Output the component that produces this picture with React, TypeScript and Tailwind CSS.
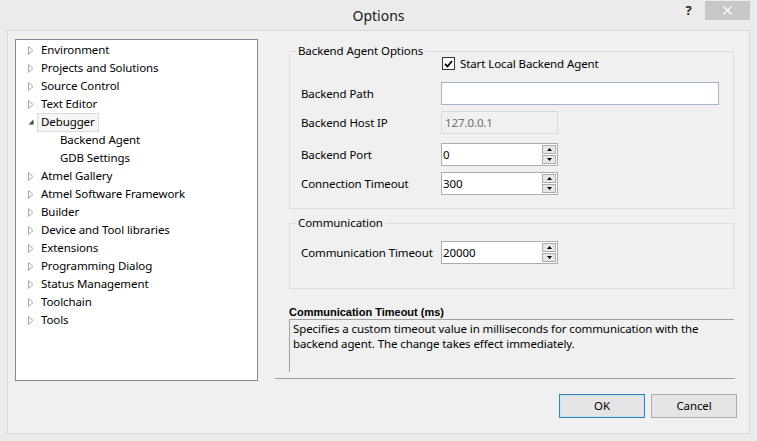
import React from "react";

// ─── Tree data ────────────────────────────────────────────────────────────────

type TreeItem = { label: string; depth: 0 | 1; expanded?: boolean; leaf?: boolean; selected?: boolean };

const TREE: TreeItem[] = [
  { label: "Environment", depth: 0 },
  { label: "Projects and Solutions", depth: 0 },
  { label: "Source Control", depth: 0 },
  { label: "Text Editor", depth: 0 },
  { label: "Debugger", depth: 0, expanded: true, selected: true },
  { label: "Backend Agent", depth: 1, leaf: true },
  { label: "GDB Settings", depth: 1, leaf: true },
  { label: "Atmel Gallery", depth: 0 },
  { label: "Atmel Software Framework", depth: 0 },
  { label: "Builder", depth: 0 },
  { label: "Device and Tool libraries", depth: 0 },
  { label: "Extensions", depth: 0 },
  { label: "Programming Dialog", depth: 0 },
  { label: "Status Management", depth: 0 },
  { label: "Toolchain", depth: 0 },
  { label: "Tools", depth: 0 },
];

function Arrow({ expanded }: { expanded?: boolean }) {
  if (expanded) {
    return (
      <svg width="6" height="6" viewBox="0 0 6 6" className="block">
        <path d="M5.5 0.5 L5.5 5.5 L0.5 5.5 Z" fill="#404040" />
      </svg>
    );
  }
  return (
    <svg width="6" height="9" viewBox="0 0 6 9" className="block">
      <path d="M0.5 0.5 L5 4.5 L0.5 8.5 Z" fill="none" stroke="#a6a6a6" strokeWidth="1" />
    </svg>
  );
}

function TreeRow({ item }: { item: TreeItem }) {
  return (
    <div className="flex h-[18px] items-center">
      <div className={["flex w-[9px] shrink-0 items-center", item.depth === 1 ? "ml-[31px]" : "ml-[12px]"].join(" ")}>
        {!item.leaf && <Arrow expanded={item.expanded} />}
      </div>
      <span
        className={[
          "flex h-[19px] items-center border px-[3px] leading-none",
          item.selected ? "border-[#dadada] bg-[#f6f6f6]" : "border-transparent",
        ].join(" ")}
      >
        {item.label}
      </span>
    </div>
  );
}

// ─── Form controls ────────────────────────────────────────────────────────────

function Spinner() {
  return (
    <div className="flex w-[15px] shrink-0 flex-col gap-px py-px pr-px">
      <div className="flex h-[10px] items-center justify-center border border-[#acacac] bg-[#e6e6e6]">
        <svg width="5" height="3" viewBox="0 0 5 3">
          <path d="M2.5 0 L5 3 L0 3 Z" fill="#000" />
        </svg>
      </div>
      <div className="flex h-[10px] items-center justify-center border border-[#acacac] bg-[#e6e6e6]">
        <svg width="5" height="3" viewBox="0 0 5 3">
          <path d="M0 0 L5 0 L2.5 3 Z" fill="#000" />
        </svg>
      </div>
    </div>
  );
}

function NumericBox({ value }: { value: string }) {
  return (
    <div className="flex h-[23px] w-[117px] border border-[#abadb3] bg-white">
      <span className="flex flex-1 items-center pl-[1px]">{value}</span>
      <Spinner />
    </div>
  );
}

function FieldRow({ label, children, className = "" }: { label: string; children: React.ReactNode; className?: string }) {
  return (
    <div className={["flex items-center", className].join(" ")}>
      <span className="w-[140px] shrink-0">{label}</span>
      {children}
    </div>
  );
}

function Group({ title, children, className = "" }: { title: string; children: React.ReactNode; className?: string }) {
  return (
    <div className={["ml-[14px] w-[445px] border border-[#dcdcdc] pl-[11px]", className].join(" ")}>
      <div className="-ml-[5px] -mt-[9px] flex h-[16px] items-center">
        <span className="bg-[#f0f0f0] px-[2px]">{title}</span>
      </div>
      {children}
    </div>
  );
}

// ─── App ──────────────────────────────────────────────────────────────────────

export default function App() {
  return (
    <div className="flex h-[441px] w-[757px] flex-col bg-[#ebebeb] font-['Segoe_UI','Noto_Sans',sans-serif] text-[11.5px] tracking-[-0.1px] text-black">
      {/* Title bar */}
      <div className="flex h-[30px] shrink-0 items-start">
        <div className="flex h-[31px] flex-1 items-center justify-center pl-[77px] text-[14px] tracking-normal text-[#1a1a1a]">
          Options
        </div>
        <div className="flex h-[22px] w-[17px] items-center justify-center text-[13px] font-bold text-[#262626]">?</div>
        <div className="ml-[8px] mr-[7px] mt-[1px] flex h-[19px] w-[45px] items-center justify-center bg-[#c7c7c7]">
          <svg width="9" height="9" viewBox="0 0 9 9">
            <path d="M0.5 0.5 L8.5 8.5 M8.5 0.5 L0.5 8.5" stroke="#fff" strokeWidth="1.4" />
          </svg>
        </div>
      </div>

      {/* Client area */}
      <div className="ml-[7px] flex h-[404px] w-[743px] border border-[#d9d9d9] bg-[#f0f0f0] pl-[7px] pt-[8px]">
        {/* Category tree */}
        <div className="h-[342px] w-[243px] shrink-0 border border-[#828790] bg-white pt-[1px]">
          {TREE.map((item) => (
            <TreeRow key={item.label} item={item} />
          ))}
        </div>

        {/* Settings panel */}
        <div className="ml-[17px] flex w-[462px] flex-col">
          <Group title="Backend Agent Options" className="mt-[12px] pb-[13px]">
            <div className="-mt-[2px] flex h-[13px] items-center pl-[141px]">
              <span className="flex h-[13px] w-[13px] items-center justify-center border border-[#333] bg-white">
                <svg width="9" height="8" viewBox="0 0 9 8">
                  <path d="M1 4 L3.5 6.5 L8 1" fill="none" stroke="#000" strokeWidth="1.8" />
                </svg>
              </span>
              <span className="ml-[5px]">Start Local Backend Agent</span>
            </div>
            <FieldRow label="Backend Path" className="mt-[12px]">
              <div className="h-[23px] w-[278px] border border-[#a6b5cb] bg-white" />
            </FieldRow>
            <FieldRow label="Backend Host IP" className="mt-[6px]">
              <div className="flex h-[23px] w-[117px] items-center border border-[#d9d9d9] bg-[#f0f0f0] pl-[3px] text-[#6d6d6d]">
                127.0.0.1
              </div>
            </FieldRow>
            <FieldRow label="Backend Port" className="mt-[9px]">
              <NumericBox value="0" />
            </FieldRow>
            <FieldRow label="Connection Timeout" className="mt-[6px]">
              <NumericBox value="300" />
            </FieldRow>
          </Group>

          <Group title="Communication" className="mt-[14px] pb-[24px]">
            <FieldRow label="Communication Timeout" className="mt-[10px]">
              <NumericBox value="20000" />
            </FieldRow>
          </Group>

          {/* Description pane */}
          <div className="ml-[14px] mt-[16px] flex h-[14px] items-center font-['Liberation_Sans',sans-serif] text-[11px] font-bold tracking-normal">
            Communication Timeout (ms)
          </div>
          <div className="ml-[14px] h-[53px] w-[445px] border-l border-t border-[#a0a0a0] border-b-white border-r-white pl-[3px] pt-[1px] leading-[15px]">
            Specifies a custom timeout value in milliseconds for communication with the
            <br />
            backend agent. The change takes effect immediately.
          </div>

          <div className="mt-[6px] h-[2px] w-[460px] border-t border-[#a0a0a0] border-b-white" />

          {/* Buttons */}
          <div className="mt-[14px] flex justify-end gap-[6px]">
            <button className="h-[24px] w-[86px] border border-[#3c7fb1] bg-[#e5e5e5] shadow-[inset_0_0_0_1px_#c4e2fb]">
              OK
            </button>
            <button className="h-[24px] w-[86px] border border-[#acacac] bg-[#e5e5e5]">Cancel</button>
          </div>
        </div>
      </div>
    </div>
  );
}
